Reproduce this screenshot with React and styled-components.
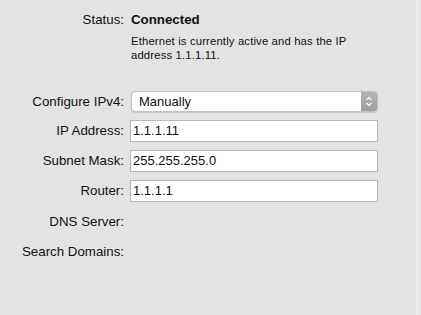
import React from "react";
import styled, { createGlobalStyle } from "styled-components";

const GlobalStyle = createGlobalStyle`
    html, body {
        margin: 0;
        padding: 0;
        background: #e8e8e8;
    }
    body {
        font-family: "Liberation Sans", Arial, sans-serif;
        color: #111;
    }
`

const Panel = styled.div`
    width: 417px;
    height: 315px;
    background: #e3e3e3;
    border-right: 1px solid #efefef;
    padding-top: 12px;
    box-sizing: border-box;
`

const Row = styled.div`
    display: grid;
    grid-template-columns: 124px 247px;
    column-gap: 7px;
    align-items: center;
    margin-top: ${p => p.top || 0}px;
    min-height: ${p => p.height || 16}px;
`

const Label = styled.div`
    font-size: 13.3px;
    line-height: 16px;
    text-align: right;
    white-space: nowrap;
`

const Value = styled.div`
    font-size: 13.3px;
    line-height: 16px;
    font-weight: ${p => (p.bold ? 700 : 400)};
`

const Note = styled.div`
    font-size: 11.3px;
    letter-spacing: 0.15px;
    line-height: 14px;
    margin-left: 131px;
    margin-top: 6px;
    width: 240px;
`

const Field = styled.div`
    height: 22px;
    box-sizing: border-box;
    background: #fff;
    border: 1px solid #b8b8b8;
    font-size: 13px;
    line-height: 20px;
    padding-left: 2px;
    margin-left: -1px;
    width: 248px;
`

const Select = styled.div`
    height: 21px;
    box-sizing: border-box;
    background: #fff;
    border: 1px solid #c2c2c2;
    border-radius: 4px;
    box-shadow: 0 0.5px 1px rgba(0, 0, 0, 0.12);
    display: flex;
    align-items: center;
    overflow: hidden;
    font-size: 13px;
`

const SelectText = styled.span`
    flex: 1;
    padding-left: 7px;
`

const Stepper = styled.div`
    width: 16px;
    height: 100%;
    background: linear-gradient(#b4b4b4, #9e9e9e);
    display: flex;
    align-items: center;
    justify-content: center;
`

function Arrows() {
    return (
        <svg width="8" height="13" viewBox="0 0 8 13">
            <path d="M1.5 5 L4 2.5 L6.5 5" fill="none" stroke="#fff" strokeWidth="1.2" />
            <path d="M1.5 8 L4 10.5 L6.5 8" fill="none" stroke="#fff" strokeWidth="1.2" />
        </svg>
    )
}

export default function App() {
    return (
        <>
            <GlobalStyle />
            <Panel>
                <Row>
                    <Label>Status:</Label>
                    <Value bold>Connected</Value>
                </Row>
                <Note>Ethernet is currently active and has the IP address 1.1.1.11.</Note>

                <Row top={29} height={21}>
                    <Label>Configure IPv4:</Label>
                    <Select>
                        <SelectText>Manually</SelectText>
                        <Stepper><Arrows /></Stepper>
                    </Select>
                </Row>
                <Row top={8} height={22}>
                    <Label>IP Address:</Label>
                    <Field>1.1.1.11</Field>
                </Row>
                <Row top={8} height={22}>
                    <Label>Subnet Mask:</Label>
                    <Field>255.255.255.0</Field>
                </Row>
                <Row top={8} height={22}>
                    <Label>Router:</Label>
                    <Field>1.1.1.1</Field>
                </Row>
                <Row top={12}>
                    <Label>DNS Server:</Label>
                    <div />
                </Row>
                <Row top={14}>
                    <Label>Search Domains:</Label>
                    <div />
                </Row>
            </Panel>
        </>
    )
}
